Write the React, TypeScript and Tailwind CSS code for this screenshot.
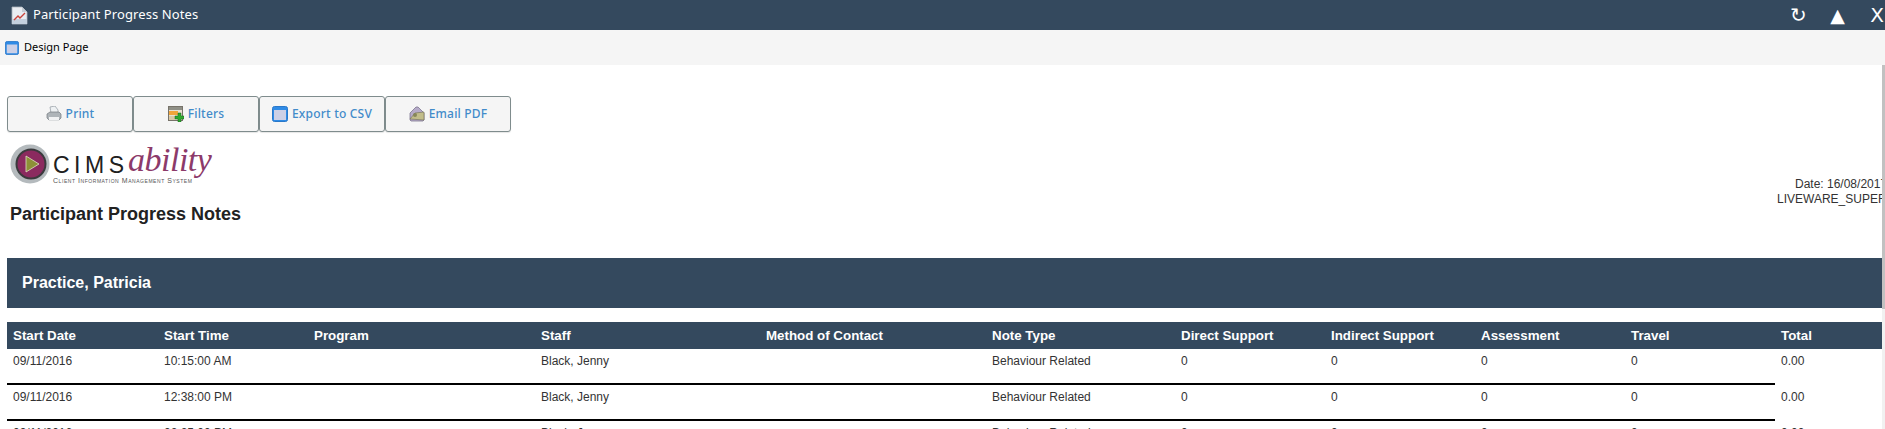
import React from "react";

const cols = ["Start Date","Start Time","Program","Staff","Method of Contact","Note Type","Direct Support","Indirect Support","Assessment","Travel","Total"];
const rows = [
  ["09/11/2016","10:15:00 AM","","Black, Jenny","","Behaviour Related","0","0","0","0","0.00"],
  ["09/11/2016","12:38:00 PM","","Black, Jenny","","Behaviour Related","0","0","0","0","0.00"],
  ["09/11/2016","02:25:00 PM","","Black, Jenny","","Behaviour Related","0","0","0","0","0.00"],
];
const widths = ["w-[151px]","w-[150px]","w-[227px]","w-[225px]","w-[226px]","w-[189px]","w-[150px]","w-[150px]","w-[150px]","w-[150px]","w-[107px]"];

const PrinterIcon = () => (
  <svg width="16" height="16" viewBox="0 0 16 16"><path d="M4 1l5-1 3 4v3H5z" fill="#eef1f3" stroke="#8f989f" strokeWidth=".7"/><path d="M1 8l3-2h9l2 2v4l-2 2H3l-2-2z" fill="#aeb4b8" stroke="#727a80" strokeWidth=".7"/><path d="M3 11h10v3.5H3z" fill="#f1f2f3"/></svg>
);
const FilterIcon = () => (
  <svg width="16" height="16" viewBox="0 0 16 16"><rect x=".5" y=".5" width="14" height="14" fill="#e7e1d3" stroke="#77736a"/><path d="M1 1h13v3H1z" fill="#8f8f86"/><path d="M1 5h9v4H1z" fill="#f2a53b"/><path d="M1 10h6v4H1z" fill="#d9c9a6"/><path d="M10 7h3v3h3v3h-3v3h-3v-3H7v-3h3z" fill="#2fa82f" stroke="#14661a" strokeWidth=".5"/></svg>
);
const WindowIcon = ({ s = 16 }: { s?: number }) => (
  <svg width={s} height={s} viewBox="0 0 16 16"><rect x=".5" y=".5" width="15" height="15" rx="2" fill="#2f8be6" stroke="#2a78c9"/><rect x="2" y="4" width="12" height="10" fill="#ccd0e6"/></svg>
);
const MailIcon = () => (
  <svg width="16" height="16" viewBox="0 0 16 16"><path d="M1 7l6-6h2l6 6v7l-1 1H2l-1-1z" fill="#b6abc9" stroke="#7d7791" strokeWidth=".8"/><path d="M1 13l5-6 9-1v8z" fill="#c2bd8a" stroke="#6f6d52" strokeWidth=".6"/><circle cx="6" cy="9" r="2" fill="#86865a"/></svg>
);
const ReportIcon = () => (
  <svg width="17" height="19" viewBox="0 0 17 19"><path d="M1 1h10l5 5v12H1z" fill="#e9edf2" stroke="#a9b3bd" strokeWidth=".8"/><path d="M11 1v5h5z" fill="#c6ced6"/><path d="M1 13h15v5H1z" fill="#c3d0de"/><path d="M3 14l4-4 2 2 5-5" fill="none" stroke="#c8443c" strokeWidth="1.4"/></svg>
);

const Btn = ({ icon, label }: { icon: React.ReactNode; label: string }) => (
  <button className="w-[126px] h-[36px] flex items-center justify-center gap-[4px] bg-[#f5f5f5] border border-[#7f8c8d] rounded-[3px] text-[#428bca] text-[12px] tracking-[0.2px] font-medium shadow-[0_1px_1px_rgba(0,0,0,0.1)]">
    {icon}
    <span>{label}</span>
  </button>
);

const Logo = () => (
  <div className="flex items-start h-[44px] w-[210px] ml-[10px]">
    <svg width="40" height="40" viewBox="0 0 40 40" className="mt-[2px] shrink-0">
      <circle cx="20" cy="20" r="19.5" fill="#b4babd" />
      <circle cx="21" cy="20" r="15.5" fill="#3a3a3d" />
      <circle cx="21" cy="20" r="13.5" fill="#8b2a5f" />
      <path d="M16 12l13 8-13 8z" fill="#8d9137" stroke="#dfe0c8" strokeWidth=".8" />
    </svg>
    <div className="relative ml-[3px] h-[44px] w-[165px]">
      <div className="absolute left-0 top-[10px] text-[23px] leading-[26px] tracking-[4.5px] text-[#202020] font-['Liberation_Sans',sans-serif]">CIMS</div>
      <div className="absolute left-[75px] top-[-4px] text-[34px] leading-[44px] tracking-[-0.5px] italic text-[#8c3a6a] font-['Liberation_Serif',serif]">ability</div>
      <div className="absolute left-0 top-[34px] text-[7px] leading-[9px] tracking-[0.55px] text-[#555] whitespace-nowrap [font-variant:small-caps] font-['Liberation_Sans',sans-serif]">Client Information Management System</div>
    </div>
  </div>
);

export default function App() {
  return (
    <div className="h-[429px] w-[1885px] overflow-hidden bg-white font-['Liberation_Sans',sans-serif]">
      <div className="h-[30px] bg-[#34495e] flex items-center pl-[11px] text-white overflow-hidden">
        <ReportIcon />
        <span className="ml-[5px] text-[13px] tracking-[0.1px] font-['Noto_Sans',sans-serif]">Participant Progress Notes</span>
        <div className="ml-auto flex items-center gap-[25px] mr-[1px] font-['DejaVu_Sans',sans-serif]">
          <span className="w-[15px] text-center text-[20px] leading-[24px]">↻</span>
          <span className="w-[15px] text-center text-[19px] leading-[24px]">▲</span>
          <span className="w-[14px] text-center text-[20px] leading-[24px]">X</span>
        </div>
      </div>
      <div className="h-[35px] bg-[#f5f5f5] flex items-center pl-[5px] gap-[5px]">
        <WindowIcon s={14} />
        <span className="text-[11px] text-black font-['Noto_Sans',sans-serif]">Design Page</span>
      </div>
      <div className="flex">
        <div className="w-[1882px] overflow-hidden">
          <div className="pl-[7px] pt-[31px] flex font-['Noto_Sans',sans-serif]">
            <Btn icon={<PrinterIcon />} label="Print" />
            <Btn icon={<FilterIcon />} label="Filters" />
            <Btn icon={<WindowIcon />} label="Export to CSV" />
            <Btn icon={<MailIcon />} label="Email PDF" />
          </div>
          <div className="flex justify-between pt-[10px]">
            <div>
              <Logo />
              <div className="ml-[10px] mt-[17px] text-[18px] leading-[22px] font-bold text-[#222]">Participant Progress Notes</div>
            </div>
            <div className="w-[105px] overflow-hidden mt-[35px] text-[12px] leading-[15px] text-[#333] whitespace-nowrap">
              <div className="pl-[18px]">Date: 16/08/2017</div>
              <div>LIVEWARE_SUPERUSER</div>
            </div>
          </div>
          <div className="ml-[7px] mt-[33px] h-[50px] bg-[#34495e] flex items-center pl-[15px] text-white text-[16px] font-bold">Practice, Patricia</div>
          <table className="ml-[7px] mt-[14px] w-[1875px] table-fixed border-separate border-spacing-0">
            <thead>
              <tr className="bg-[#34495e] h-[27px] text-white text-[13.33px]">
                {cols.map((c, i) => (
                  <th key={c} className={`${widths[i]} text-left font-bold pl-[6px] p-0`}>{c}</th>
                ))}
              </tr>
            </thead>
            <tbody>
              {rows.map((r, ri) => (
                <tr key={ri} className="h-[36px] text-[12px] text-[#333]">
                  {r.map((c, i) => (
                    <td key={i} className={i < 10 ? "align-top pl-[6px] pt-[3px] border-b-2 border-black" : "align-top pl-[6px] pt-[3px]"}>{c}</td>
                  ))}
                </tr>
              ))}
            </tbody>
          </table>
        </div>
        <div className="w-[3px] h-[364px] bg-[#f1f1f1]">
          <div className="h-[244px] bg-[#c1c1c1]" />
        </div>
      </div>
    </div>
  );
}
